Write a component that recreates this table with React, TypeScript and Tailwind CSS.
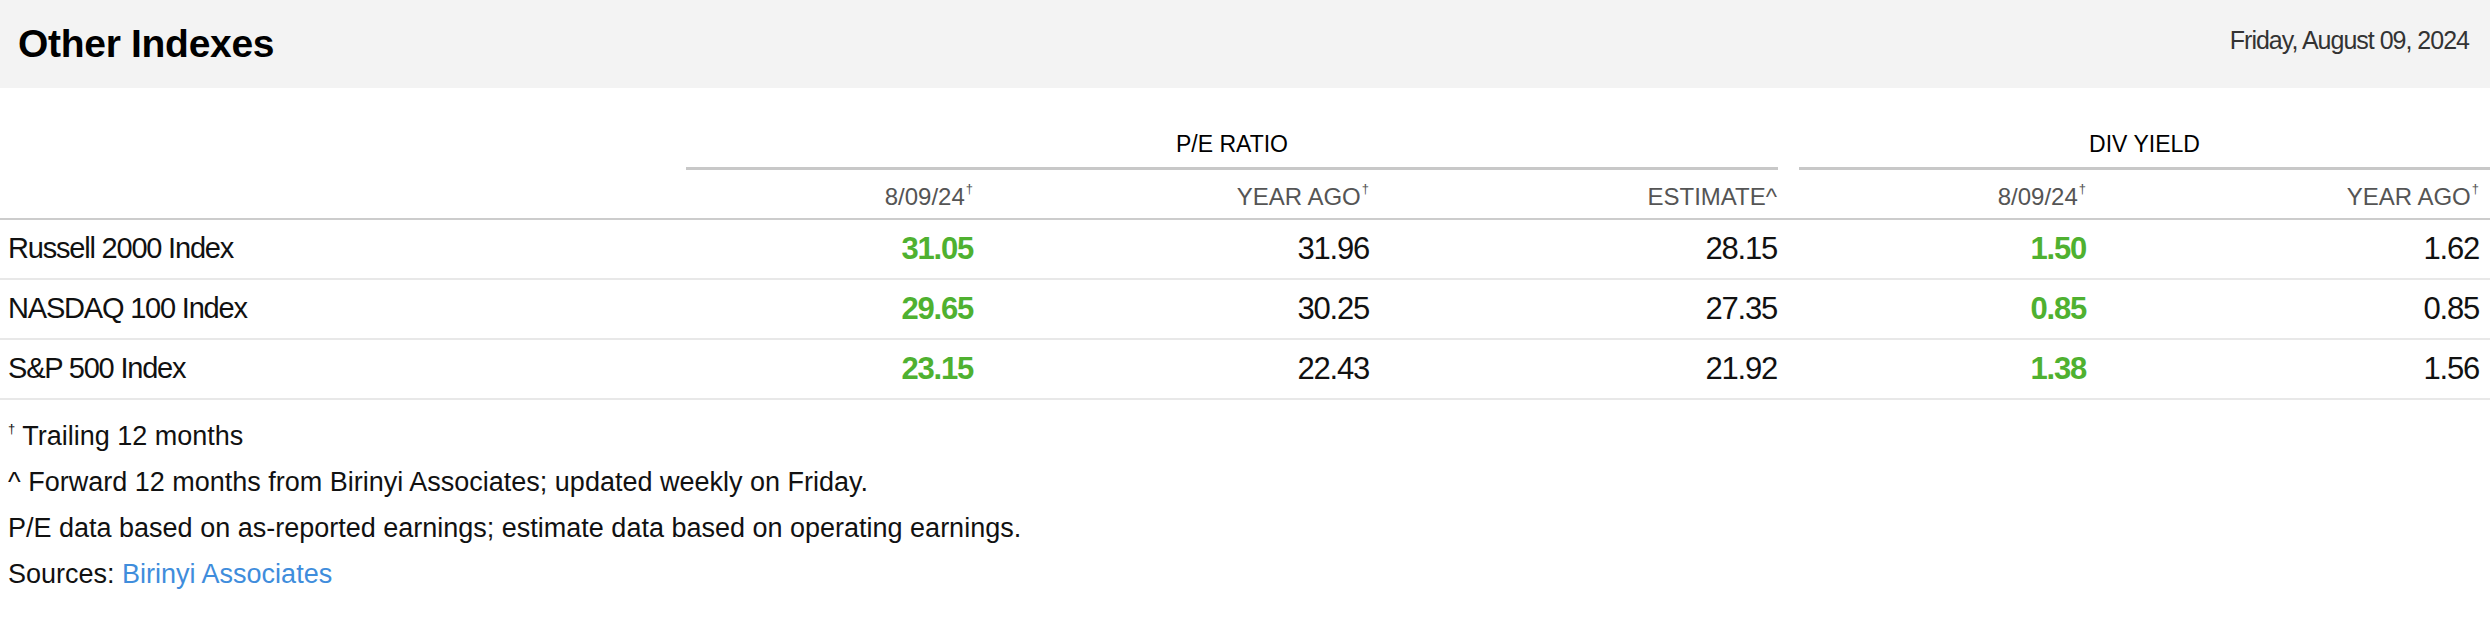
import React from 'react'

const ROWS = [
    { name: 'Russell 2000 Index', pe: '31.05', peAgo: '31.96', est: '28.15', dy: '1.50', dyAgo: '1.62' },
    { name: 'NASDAQ 100 Index', pe: '29.65', peAgo: '30.25', est: '27.35', dy: '0.85', dyAgo: '0.85' },
    { name: 'S&P 500 Index', pe: '23.15', peAgo: '22.43', est: '21.92', dy: '1.38', dyAgo: '1.56' },
]

const GRID = 'grid grid-cols-[676px_308px_396px_408px_309px_393px]'

function Sup({ children }: { children: React.ReactNode }) {
    return <sup className="text-[13px] top-[-0.9em] ml-[1px]">{children}</sup>
}

function SubHead({ children }: { children: React.ReactNode }) {
    return (
        <div className="pr-[11px] pt-[13px] pb-[8px] text-right text-[24px] leading-[27px] text-[#555]">
            {children}
        </div>
    )
}

function Num({ value, up }: { value: string; up?: boolean }) {
    return (
        <div
            className={
                up
                    ? 'flex items-center justify-end pr-[11px] text-[31px] font-bold tracking-[-1.2px] text-[#4fb130]'
                    : 'flex items-center justify-end pr-[11px] text-[31px] tracking-[-1.2px] text-[#111]'
            }
        >
            {value}
        </div>
    )
}

export default function App() {
    return (
        <div className="w-full bg-white font-['Liberation_Sans',Arial,sans-serif] text-[#111]">
            {/* title bar */}
            <div className="flex h-[88px] items-center justify-between bg-[#f3f3f3] pl-[18px] pr-[21px]">
                <h1 className="text-[39px] font-bold tracking-[-0.3px] text-black">Other Indexes</h1>
                <div className="pb-[6px] text-[25px] tracking-[-1px] text-[#333]">
                    Friday, August 09, 2024
                </div>
            </div>

            {/* group headers */}
            <div className={GRID}>
                <div />
                <div className="col-span-3 mx-[10px] border-b-[3px] border-[#c8c8c8] pt-[42px] pb-[9px] text-center text-[23px] leading-[28px] text-black">
                    P/E RATIO
                </div>
                <div className="col-span-2 ml-[11px] border-b-[3px] border-[#c8c8c8] pt-[42px] pb-[9px] text-center text-[23px] leading-[28px] text-black">
                    DIV YIELD
                </div>
            </div>

            {/* column headers */}
            <div className={`${GRID} border-b-2 border-[#cccccc]`}>
                <div />
                <SubHead>8/09/24<Sup>†</Sup></SubHead>
                <SubHead>YEAR AGO<Sup>†</Sup></SubHead>
                <SubHead>ESTIMATE^</SubHead>
                <SubHead>8/09/24<Sup>†</Sup></SubHead>
                <SubHead>YEAR AGO<Sup>†</Sup></SubHead>
            </div>

            {ROWS.map(row => (
                <div key={row.name} className={`${GRID} h-[60px] border-b-2 border-[#e8e8e8]`}>
                    <div className="flex items-center pl-[8px] text-[29px] tracking-[-1.2px] text-[#111]">
                        {row.name}
                    </div>
                    <Num value={row.pe} up />
                    <Num value={row.peAgo} />
                    <Num value={row.est} />
                    <Num value={row.dy} up />
                    <Num value={row.dyAgo} />
                </div>
            ))}

            {/* notes */}
            <div className="mt-[13px] pl-[8px] text-[27px] leading-[46px] text-[#111]">
                <p>
                    <sup className="text-[13px] top-[-0.9em]">†</sup> Trailing 12 months
                </p>
                <p>^ Forward 12 months from Birinyi Associates; updated weekly on Friday.</p>
                <p>P/E data based on as-reported earnings; estimate data based on operating earnings.</p>
                <p>
                    Sources: <span className="text-[#3f8ddc]">Birinyi Associates</span>
                </p>
            </div>
        </div>
    )
}
